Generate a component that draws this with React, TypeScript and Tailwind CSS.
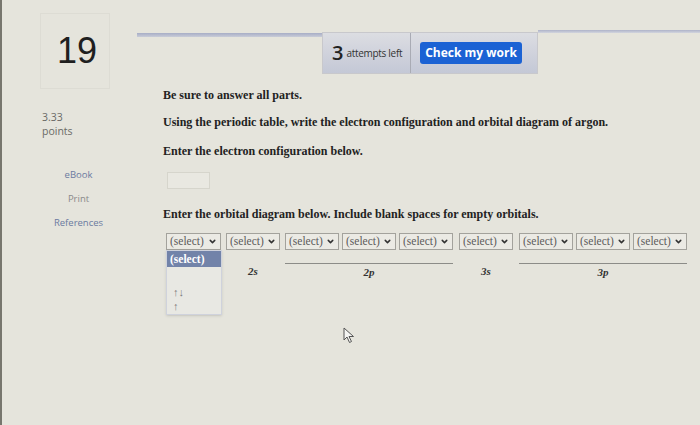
import { ChevronDown } from 'lucide-react';

const serif = { fontFamily: '"Liberation Serif", "Times New Roman", serif' };
const sans = { fontFamily: '"Open Sans", "Liberation Sans", Arial, sans-serif' };

const Select = ({ w = 'w-[54px]' }: { w?: string }) => (
  <div
    className={`${w} h-[17px] flex items-center justify-between border border-[#a3a29c] bg-[#ebeae4] pl-[3px] pr-[3px] text-[11.5px] font-normal text-[#5b5b5b] leading-none`}
    style={serif}
  >
    <span>(select)</span>
    <ChevronDown className="h-[9px] w-[9px] text-[#333]" strokeWidth={4} />
  </div>
);

const Group = ({ count, label, lined }: { count: number; label: string; lined?: boolean }) => (
  <div className="flex flex-col">
    <div className="flex gap-[3px]">
      {Array.from({ length: count }).map((_, i) => (
        <Select key={i} />
      ))}
    </div>
    <div className={`mt-[13px] ${lined ? 'border-t border-[#8c8c88]' : ''}`} />
    <div className="text-center text-[11px] italic font-bold text-[#333] mt-[3px] leading-none" style={serif}>
      {label}
    </div>
  </div>
);

export default function App() {
  return (
    <div className="w-[700px] h-[425px] bg-[#e5e4dc] border-l-2 border-[#77766e] flex overflow-hidden relative">
      {/* left column */}
      <div className="w-[135px] shrink-0 flex flex-col">
        <div className="ml-[38px] mt-[13px] w-[70px] h-[76px] border border-[#dddcd4] flex items-center pl-[16px]">
          <span className="text-[36px] text-[#1f1f1f] leading-none" style={{ fontFamily: '"Liberation Sans", Arial, sans-serif' }}>19</span>
        </div>
        <div className="ml-[40px] mt-[21px] text-[10.5px] leading-[14px] text-[#6a6a66]" style={sans}>
          <div>3.33</div>
          <div>points</div>
        </div>
        <div className="mt-[32px] flex flex-col items-center pl-[18px] gap-[14px] text-[9.5px] leading-[10px]" style={sans}>
          <span className="text-[#6b7aa0]">eBook</span>
          <span className="text-[#8a8a8a]">Print</span>
          <span className="text-[#6b7aa0]">References</span>
        </div>
      </div>

      {/* main column */}
      <div className="flex-1 flex flex-col">
        <div className="flex items-start h-[80px]">
          <div className="w-[185px] h-[4px] mt-[33px] bg-gradient-to-b from-[#a7adc6] to-[#c9ccd8]" />
          <div className="w-[216px] h-[42px] mt-[32px] flex items-center bg-gradient-to-b from-[#dcdde2] to-[#c4c8d6] border border-[#c8c8cc]">
            <div className="w-[88px] h-full flex items-center pl-[9px] gap-[3px] border-r border-[#a9abb4]" style={sans}>
              <span className="text-[20px] font-semibold text-[#222] leading-none">3</span>
              <span className="text-[10px] text-[#333] tracking-[-0.3px]">attempts left</span>
            </div>
            <div className="ml-[9px] w-[102px] h-[22px] rounded-[3px] bg-[#1b62d4] flex items-center justify-center text-white text-[12px] font-bold" style={sans}>
              Check my work
            </div>
          </div>
          <div className="flex-1 h-[3px] mt-[30px] bg-gradient-to-b from-[#aeb3c9] to-[#d3d5de]" />
        </div>

        <div className="pl-[26px] text-[12px] font-bold text-[#222]" style={serif}>
          <p className="mt-[8px] leading-[14px]">Be sure to answer all parts.</p>
          <p className="mt-[13px] leading-[14px]">Using the periodic table, write the electron configuration and orbital diagram of argon.</p>
          <p className="mt-[15px] leading-[14px]">Enter the electron configuration below.</p>
          <div className="mt-[14px] ml-[4px] w-[43px] h-[17px] border border-[#d6d5cc] bg-[#e9e8e1]" />
          <p className="mt-[18px] leading-[14px]">Enter the orbital diagram below. Include blank spaces for empty orbitals.</p>

          <div className="mt-[12px] ml-[3px] flex items-start gap-[5px] relative">
            <div className="flex flex-col relative">
              <Select w="w-[55px]" />
              <div className="absolute top-[17px] left-0 w-[56px] h-[65px] bg-[#e8e8e3] border border-[#cfd2dc] shadow-sm font-normal">
                <div className="h-[16px] bg-[#7283a9] text-white text-[11.5px] leading-[16px] pl-[3px] font-bold">(select)</div>
                <div className="mt-[18px] pl-[6px] text-[11px] leading-[14px] text-[#7a7a7a]" style={sans}>
                  <div>↑↓</div>
                  <div>↑</div>
                </div>
              </div>
            </div>
            <Group count={1} label="2s" />
            <Group count={3} label="2p" lined />
            <div className="ml-[1px]"><Group count={1} label="3s" /></div>
            <div className="ml-[1px]"><Group count={3} label="3p" lined /></div>
          </div>
        </div>
      </div>

      {/* mouse pointer */}
      <svg className="absolute left-[341px] top-[327px]" width="12" height="17" viewBox="0 0 12 17">
        <path d="M1 1 L1 13 L4 10 L6.5 15.5 L8.5 14.5 L6 9.5 L10.5 9.5 Z" fill="#f4f4f2" stroke="#555" strokeWidth="1" strokeLinejoin="round" />
      </svg>
    </div>
  );
}
